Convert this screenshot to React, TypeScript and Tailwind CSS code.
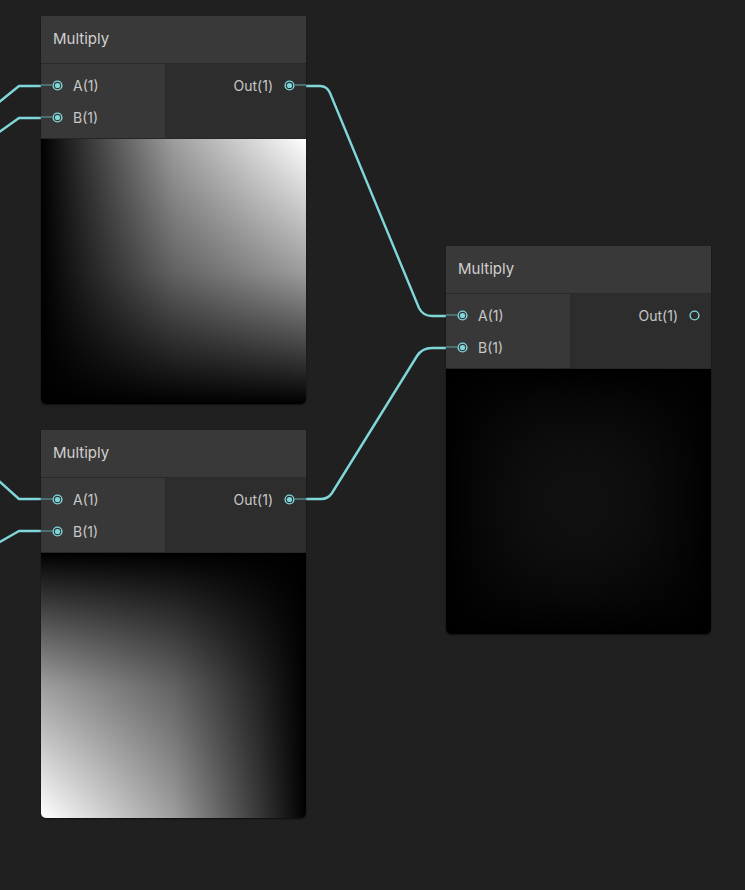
import React from "react";

const WIRE = "#7fd7d9";

type NodeProps = {
  x: string;
  y: string;
  preview: string;
  outConnected?: boolean;
};

function PortDot({ filled = true }: { filled?: boolean }) {
  return (
    <svg width="11" height="11" viewBox="0 0 11 11" className="shrink-0">
      <circle cx="5.5" cy="5.5" r="4.4" fill="none" stroke={WIRE} strokeWidth="1.4" />
      {filled && <circle cx="5.5" cy="5.5" r="2.6" fill={WIRE} />}
    </svg>
  );
}

function InPort({ label }: { label: string }) {
  return (
    <div className="flex h-[32px] items-center">
      <div className="h-[2px] w-[11px] bg-[#4b6f71]" />
      <PortDot />
      <span className="ml-[10px] text-[14px] text-[#c8c8c8]">{label}</span>
    </div>
  );
}

function MultiplyNode({ x, y, preview, outConnected = true }: NodeProps) {
  return (
    <div className={`absolute ${x} ${y} w-[265px] overflow-hidden rounded-b-[5px] bg-[#2d2d2d] shadow-[0_1px_2px_rgba(0,0,0,0.6)]`}>
      <div className="flex h-[48px] items-center border-b border-[#292929] bg-[#393939] px-[12px]">
        <span className="text-[15px] text-[#d0d0d0]">Multiply</span>
      </div>
      <div className="flex h-[75px] border-b border-[#262626]">
        <div className="flex w-[125px] flex-col border-r border-[#2a2a2a] bg-[#383838] pt-[5px]">
          <InPort label="A(1)" />
          <InPort label="B(1)" />
        </div>
        <div className="flex flex-1 flex-col bg-[#2d2d2d] pt-[5px]">
          <div className="flex h-[32px] items-center justify-end">
            <span className="mr-[11px] text-[14px] text-[#c8c8c8]">Out(1)</span>
            <PortDot filled={outConnected} />
            <div className={`h-[2px] w-[11px] ${outConnected ? "bg-[#4b6f71]" : "bg-transparent"}`} />
          </div>
        </div>
      </div>
      <div className={`h-[265px] w-full bg-blend-multiply ${preview}`} />
    </div>
  );
}

export default function App() {
  return (
    <div className="relative h-[890px] w-[745px] overflow-hidden bg-[#202020] font-['Inter','Noto_Sans',sans-serif]">
      <svg className="pointer-events-none absolute inset-0" width="745" height="890" viewBox="0 0 745 890" fill="none">
        <g stroke={WIRE} strokeWidth="2.4" strokeLinecap="round" strokeLinejoin="round">
          <path d="M-2,103 L19,86 L41,86" />
          <path d="M-2,133 L19,118 L41,118" />
          <path d="M-2,480 L19,499 L41,499" />
          <path d="M-2,543 L19,531 L41,531" />
          <path d="M306,86 L320,86 Q327,86 330,93 L419,308 Q423,316 432,316 L446,316" />
          <path d="M306,499 L321,499 Q328,499 332,493 L417,356 Q422,348 432,348 L446,348" />
        </g>
      </svg>

      <MultiplyNode
        x="left-[41px]"
        y="top-[16px]"
        preview="bg-[image:linear-gradient(to_right,#000,#9e9e9e_50%,#fff),linear-gradient(to_bottom,#fff,#9e9e9e_50%,#000)]"
      />
      <MultiplyNode
        x="left-[41px]"
        y="top-[430px]"
        preview="bg-[image:linear-gradient(to_left,#000,#9e9e9e_50%,#fff),linear-gradient(to_bottom,#000,#9e9e9e_50%,#fff)]"
      />
      <MultiplyNode
        x="left-[446px]"
        y="top-[246px]"
        outConnected={false}
        preview="bg-[image:linear-gradient(to_right,#000,#fff),linear-gradient(to_left,#000,#fff),linear-gradient(to_bottom,#000,#fff),linear-gradient(to_top,#000,#fff)]"
      />
    </div>
  );
}
